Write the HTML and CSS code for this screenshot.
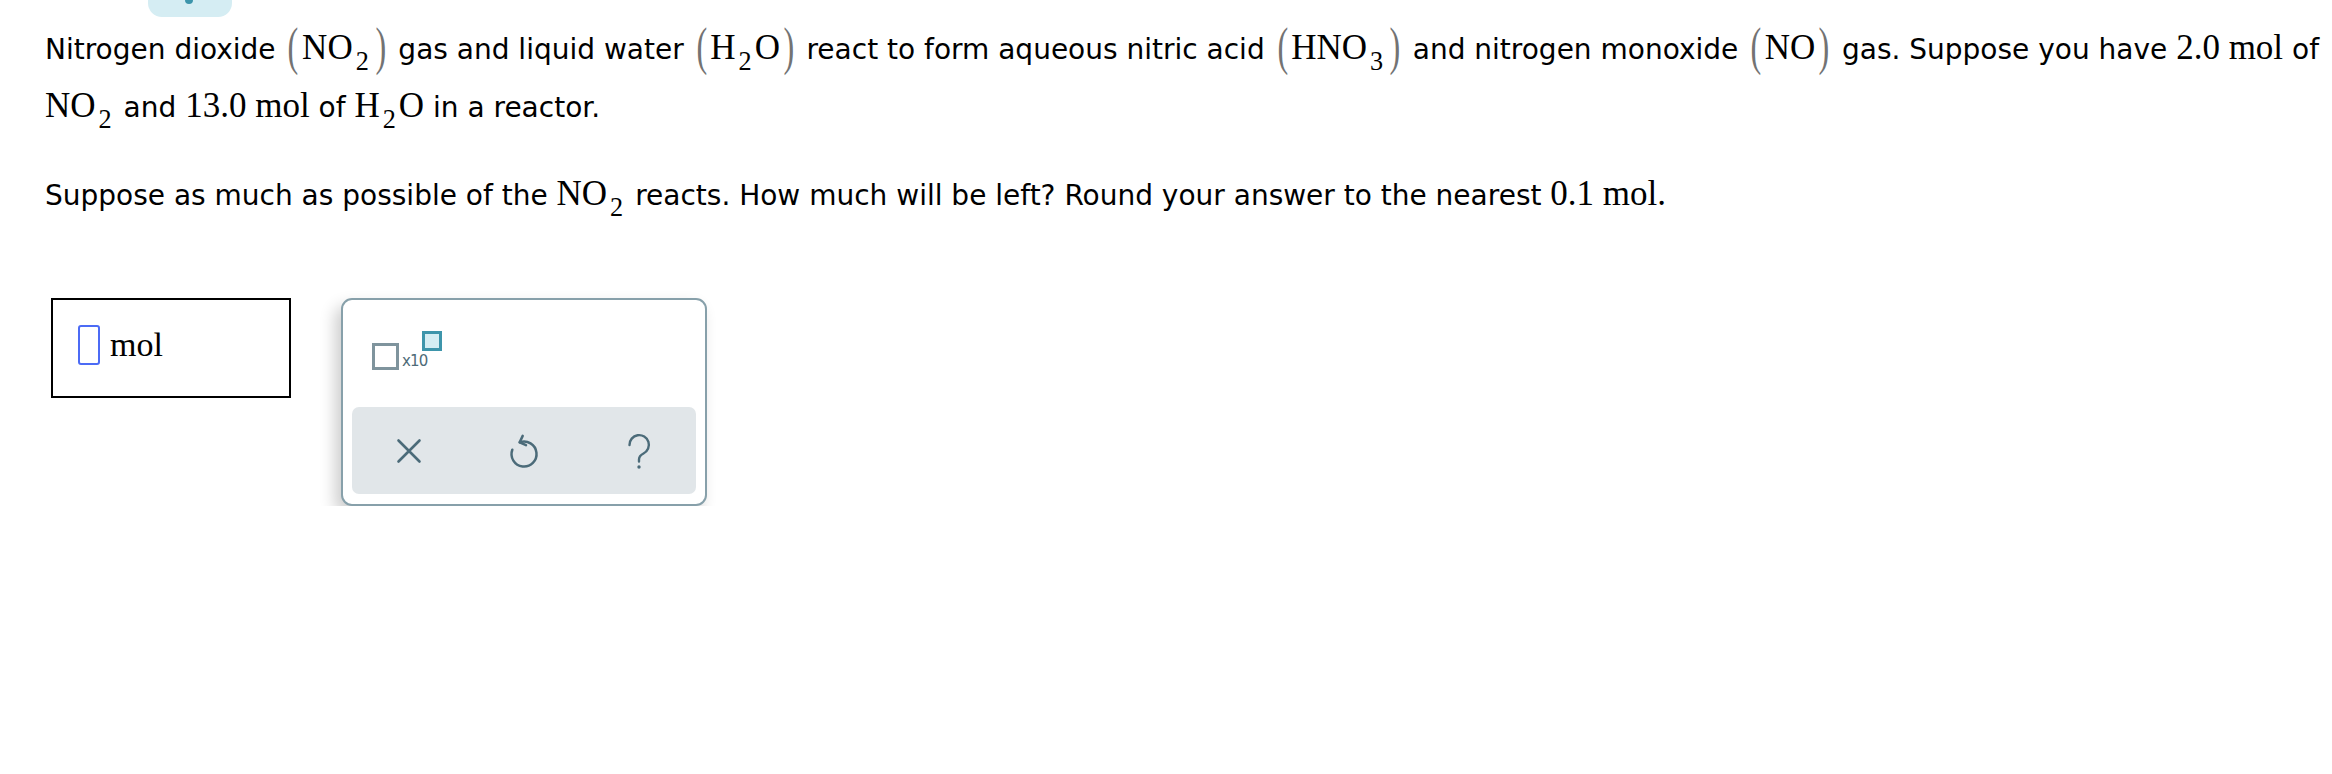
FILE: index.html
```html
<!DOCTYPE html>
<html>
<head>
<meta charset="utf-8">
<link rel="stylesheet" href="styles.css">
</head>
<body>
<div class="tab"><span class="tab-dot"></span></div>
<div class="question">
  <p class="para">Nitrogen dioxide <span class="m"><span class="paren">(</span>NO<sub>2</sub><span class="paren">)</span></span> gas and liquid water <span class="m"><span class="paren">(</span>H<sub>2</sub>O<span class="paren">)</span></span> react to form aqueous nitric acid <span class="m"><span class="paren">(</span>HNO<sub>3</sub><span class="paren">)</span></span> and nitrogen monoxide <span class="m"><span class="paren">(</span>NO<span class="paren">)</span></span> gas. Suppose you have <span class="m">2.0 mol</span> of <span class="m">NO<sub>2</sub></span> and <span class="m">13.0 mol</span> of <span class="m">H<sub>2</sub>O</span> in a reactor.</p>
  <p class="para">Suppose as much as possible of the <span class="m">NO<sub>2</sub></span> reacts. How much will be left? Round your answer to the nearest <span class="m">0.1 mol.</span></p>
</div>
<div class="answer-row">
  <div class="answer-box">
    <span class="cursor"></span>
    <span class="unit">mol</span>
  </div>
  <div class="panel">
    <div class="sci">
      <span class="sq-base"></span>
      <span class="x10">x10</span>
      <span class="sq-exp"></span>
    </div>
    <div class="bar">
      <span class="btn">
        <svg width="26" height="26" viewBox="0 0 26 26" fill="none" stroke="#4b6b79" stroke-width="2.6" stroke-linecap="round"><path d="M2.5 2.5 L23.5 23.5 M23.5 2.5 L2.5 23.5"/></svg>
      </span>
      <span class="btn">
        <svg width="34" height="38" viewBox="0 0 34 38" fill="none" stroke="#4b6b79" stroke-width="2.5" stroke-linecap="round" stroke-linejoin="round"><path d="M12.7 10.3 A12.5 12.5 0 1 1 5.3 17.7"/><path d="M15.7 3.9 L12.7 10.3 L19 13.2"/></svg>
      </span>
      <span class="btn">
        <svg width="24" height="38" viewBox="0 0 24 38" fill="none" stroke="#4b6b79" stroke-width="2.4" stroke-linecap="round"><path d="M2.5 13 A9.7 9.7 0 1 1 16.5 21.5 C13.5 23 12 24.5 12 27.5 V29.5"/><circle cx="12" cy="35" r="1.7" fill="#4b6b79" stroke="none"/></svg>
      </span>
    </div>
  </div>
</div>
</body>
</html>
```

FILE: styles.css
```css
html, body {
  margin: 0;
  padding: 0;
  background: #ffffff;
}

body {
  font-family: "DejaVu Sans", Verdana, sans-serif;
  color: #000;
}

.tab {
  margin-left: 148px;
  width: 84px;
  height: 17px;
  background: #d5edf3;
  border-radius: 0 0 14px 14px;
  display: flex;
  justify-content: center;
}

.tab-dot {
  width: 8px;
  height: 4px;
  margin-left: -2px;
  background: #3d95ab;
  border-radius: 0 0 4px 4px;
}

.question {
  padding: 4px 8px 0 45px;
}

.para {
  margin: 0;
  font-size: 28px;
  line-height: 58px;
}

.para + .para {
  margin-top: 30px;
}

.m {
  font-family: "Liberation Serif", "Times New Roman", serif;
  font-size: 35px;
  line-height: 0;
  white-space: nowrap;
}

.m sub {
  font-size: 0.75em;
  vertical-align: -0.4em;
  line-height: 0;
  margin: 0 3px 0 3px;
}

.paren {
  display: inline-block;
  color: #737373;
  font-weight: normal;
  transform: scale(0.92, 1.48);
  transform-origin: 50% 60%;
  margin: 0 3px;
}

.answer-row {
  display: flex;
  align-items: flex-start;
  gap: 50px;
  padding-left: 51px;
  margin-top: 73px;
}

.answer-box {
  box-sizing: border-box;
  width: 240px;
  height: 100px;
  border: 2px solid #000;
  padding: 25px 0 0 25px;
  display: flex;
  align-items: flex-start;
}

.cursor {
  box-sizing: border-box;
  width: 22px;
  height: 40px;
  border: 2px solid #4c6bf5;
  border-radius: 3px;
}

.unit {
  margin-left: 10px;
  font-family: "Liberation Serif", "Times New Roman", serif;
  font-size: 34px;
  line-height: 40px;
}

.panel {
  box-sizing: border-box;
  width: 366px;
  height: 208px;
  border: 2px solid #87a0aa;
  border-radius: 11px;
  background: #fff;
  box-shadow: -6px 8px 16px rgba(0, 0, 0, 0.2);
  display: flex;
  flex-direction: column;
}

.sci {
  display: flex;
  align-items: flex-start;
  padding: 31px 0 0 29px;
}

.sq-base {
  box-sizing: border-box;
  width: 27px;
  height: 27px;
  margin-top: 12px;
  border: 3px solid #7f949d;
}

.x10 {
  margin: 23px 0 0 3px;
  font-family: "DejaVu Sans", Verdana, sans-serif;
  font-size: 15px;
  line-height: 15px;
  color: #4e6b78;
  letter-spacing: -0.8px;
}

.sq-exp {
  box-sizing: border-box;
  width: 20px;
  height: 20px;
  margin-left: -6px;
  border: 3px solid #3d95ab;
  background: #d4edf3;
}

.bar {
  margin: auto 9px 10px 9px;
  height: 87px;
  background: #e1e6e9;
  border-radius: 7px;
  display: grid;
  grid-template-columns: 1fr 1fr 1fr;
  align-items: center;
  justify-items: center;
}

.btn {
  display: flex;
  align-items: center;
  justify-content: center;
}
```
